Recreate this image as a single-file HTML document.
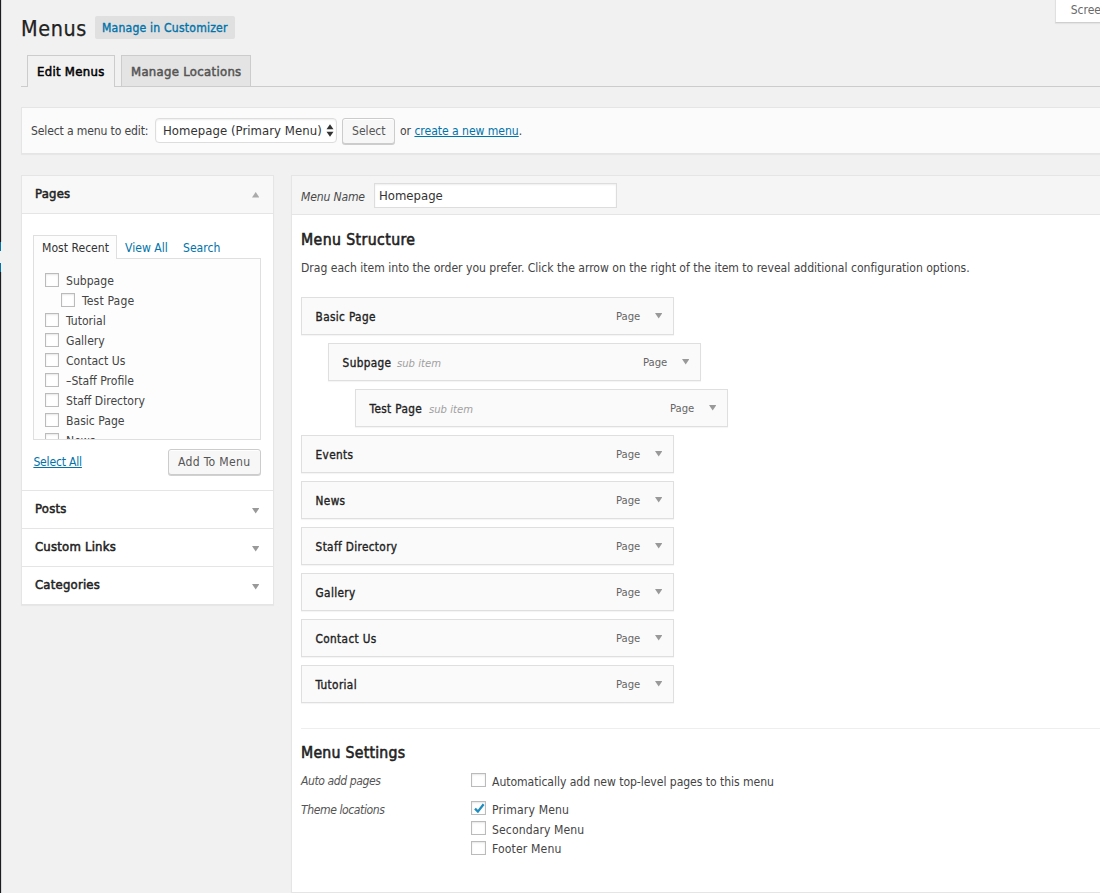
<!DOCTYPE html>
<html lang="en">
<head>
<meta charset="utf-8">
<title>Menus</title>
<style>
*{box-sizing:border-box;margin:0;padding:0}
html,body{width:1100px;height:893px;overflow:hidden;background:#f1f1f1}
body{position:relative;font-family:"DejaVu Sans Condensed","Liberation Sans",sans-serif;font-size:12.1px;color:#444;line-height:1}
.abs{position:absolute}
.t{position:absolute;white-space:nowrap;line-height:1}
.sb{-webkit-text-stroke:0.35px currentColor;letter-spacing:0.15px}
.sb3{-webkit-text-stroke:0.55px currentColor;letter-spacing:0.4px}
.sb4{-webkit-text-stroke:0.5px currentColor;letter-spacing:0.2px}
.sb2{-webkit-text-stroke:0.5px currentColor}
a{color:#0073aa}
.edge{left:0;top:0;width:2px;height:893px;background:linear-gradient(90deg,#1b1e21 0,#1b1e21 1px,#d8d8d8 1px,#d8d8d8 2px)}
.screen{left:1055px;top:-1px;width:60px;height:24px;background:#fff;border:1px solid #e0e0e0;border-bottom-color:#cfcfcf;box-shadow:0 1px 1px rgba(0,0,0,.05)}
.btncust{left:95px;top:16px;width:140px;height:23px;background:#e0e0e0;border-radius:2px}
.tabline{left:21px;top:86px;width:1090px;height:1px;background:#ccc}
.tab{top:55px;height:31px;border:1px solid #ccc;border-bottom:none;background:#e4e4e4}
.tab.act{background:#f1f1f1;height:32px}
.panel{background:#fff;border:1px solid #e5e5e5;box-shadow:0 1px 1px rgba(0,0,0,.04)}
.sel{background:#fff;border:1px solid #ddd;border-radius:4px;box-shadow:inset 0 1px 2px rgba(0,0,0,.07)}
.btn{background:#f7f7f7;border:1px solid #ccc;border-radius:3px;box-shadow:inset 0 1px 0 #fff,0 1px 0 rgba(0,0,0,.18)}
.inp{background:#fff;border:1px solid #ddd;box-shadow:inset 0 1px 2px rgba(0,0,0,.07)}
.cb{position:absolute;width:14px;height:14px;background:#fff;border:1px solid #bbb;box-shadow:inset 0 1px 2px rgba(0,0,0,.1)}
.mi{position:absolute;height:38px;width:373px;background:#fafafa;border:1px solid #dfdfdf;box-shadow:0 1px 1px rgba(0,0,0,.04)}
.mi .n{left:13.6px;top:14px;color:#222;font-size:11.7px;letter-spacing:0.36px}
.mi .s{top:14px;font-style:italic;color:#a0a0a0;font-size:11.2px;letter-spacing:0}
.mi .p{left:314px;top:13px;color:#666;font-size:11.2px}
.tri{position:absolute;width:7.4px;height:5.6px;background:#999;clip-path:polygon(0 0,100% 0,50% 100%)}
.triu{position:absolute;width:7.4px;height:5.6px;background:#aaa;clip-path:polygon(0 100%,100% 100%,50% 0)}
.mi .tri{left:353px;top:15px}
.hd{color:#222}
.it{font-style:italic;color:#555}
</style>
</head>
<body>
<div class="abs edge"></div>
<div class="abs" style="left:0;top:242px;width:2px;height:30px;background:#f1f1f1"></div>
<div class="abs" style="left:0;top:242px;width:1px;height:9px;background:#0073aa"></div>
<div class="abs" style="left:0;top:263px;width:1px;height:9px;background:#0073aa"></div>

<div class="abs screen"></div>
<div class="t" style="left:1070.7px;top:4px;font-size:12px;color:#6a6a6a">Screen Options</div>

<div class="t" style="left:21px;top:18px;font-size:21.4px;color:#222;letter-spacing:0.6px;-webkit-text-stroke:0.25px #222">Menus</div>
<div class="abs btncust"></div>
<div class="t sb" style="left:102px;top:22px;color:#0073aa;letter-spacing:0.2px">Manage in Customizer</div>

<div class="abs tabline"></div>
<div class="abs tab act" style="left:27px;width:88px"></div>
<div class="t sb2" style="left:37px;top:65px;font-size:13px;color:#000;letter-spacing:0.3px">Edit Menus</div>
<div class="abs tab" style="left:121px;width:130px"></div>
<div class="t sb2" style="left:131px;top:65px;font-size:13px;color:#555;letter-spacing:0.3px">Manage Locations</div>

<!-- select menu bar -->
<div class="abs panel" style="left:21px;top:107px;width:1090px;height:47px;background:#fbfbfb"></div>
<div class="t" style="left:31px;top:125px;letter-spacing:-0.15px">Select a menu to edit:</div>
<div class="abs sel" style="left:155px;top:118px;width:182px;height:25px"></div>
<div class="t" style="left:163px;top:124px;font-size:13px;color:#333;letter-spacing:0.05px">Homepage (Primary Menu)</div>
<svg class="abs" style="left:326px;top:124px" width="8" height="13" viewBox="0 0 8 13"><path d="M4 0.3 L7.5 5.2 L0.5 5.2 Z M4 12.7 L7.5 7.8 L0.5 7.8 Z" fill="#333"/></svg>
<div class="abs btn" style="left:342px;top:118px;width:53px;height:26px"></div>
<div class="t" style="left:352px;top:125px;color:#555">Select</div>
<div class="t" style="left:400px;top:125px;letter-spacing:-0.05px">or <a href="#">create a new menu</a>.</div>

<!-- left panel -->
<div class="abs panel" style="left:21px;top:175px;width:253px;height:430px"></div>
<div class="abs" style="left:22px;top:176px;width:251px;height:38px;background:#f8f8f8;border-bottom:1px solid #e5e5e5"></div>
<div class="t sb4 hd" style="left:35px;top:187px;font-size:13px">Pages</div>
<div class="triu" style="left:252px;top:192px"></div>

<div class="abs" style="left:33px;top:258px;width:228px;height:182px;background:#fdfdfd;border:1px solid #dfdfdf"></div>
<div class="abs" style="left:33px;top:235px;width:84px;height:24px;background:#fdfdfd;border:1px solid #dfdfdf;border-bottom:none"></div>
<div class="t" style="left:42px;top:242px;color:#333">Most Recent</div>
<div class="t" style="left:125px;top:242px;color:#0073aa">View All</div>
<div class="t" style="left:183px;top:242px;color:#0073aa">Search</div>

<div class="abs" style="left:34px;top:259px;width:226px;height:180px;overflow:hidden">
  <div class="cb" style="left:11px;top:14px"></div><div class="t" style="left:32px;top:16px">Subpage</div>
  <div class="cb" style="left:27px;top:34px"></div><div class="t" style="left:48px;top:36px;letter-spacing:0.15px">Test Page</div>
  <div class="cb" style="left:11px;top:54px"></div><div class="t" style="left:32px;top:56px">Tutorial</div>
  <div class="cb" style="left:11px;top:74px"></div><div class="t" style="left:32px;top:76px">Gallery</div>
  <div class="cb" style="left:11px;top:94px"></div><div class="t" style="left:32px;top:96px">Contact Us</div>
  <div class="cb" style="left:11px;top:114px"></div><div class="t" style="left:32px;top:116px">–Staff Profile</div>
  <div class="cb" style="left:11px;top:134px"></div><div class="t" style="left:32px;top:136px">Staff Directory</div>
  <div class="cb" style="left:11px;top:154px"></div><div class="t" style="left:32px;top:156px">Basic Page</div>
  <div class="cb" style="left:11px;top:174px"></div><div class="t" style="left:32px;top:176px">News</div>
</div>

<div class="t" style="left:33.4px;top:456px;letter-spacing:-0.2px"><a href="#">Select All</a></div>
<div class="abs btn" style="left:168px;top:449px;width:93px;height:26px"></div>
<div class="t" style="left:178px;top:456px;color:#555;letter-spacing:0.3px">Add To Menu</div>

<div class="abs" style="left:22px;top:490px;width:251px;height:1px;background:#e5e5e5"></div>
<div class="t sb4 hd" style="left:35px;top:502px;font-size:13px">Posts</div>
<div class="tri" style="left:252px;top:508px"></div>
<div class="abs" style="left:22px;top:528px;width:251px;height:1px;background:#e5e5e5"></div>
<div class="t sb4 hd" style="left:35px;top:540px;font-size:13px">Custom Links</div>
<div class="tri" style="left:252px;top:546px"></div>
<div class="abs" style="left:22px;top:566px;width:251px;height:1px;background:#e5e5e5"></div>
<div class="t sb4 hd" style="left:35px;top:578px;font-size:13px">Categories</div>
<div class="tri" style="left:252px;top:584px"></div>

<!-- right panel -->
<div class="abs panel" style="left:291px;top:175px;width:820px;height:718px"></div>
<div class="abs" style="left:292px;top:176px;width:819px;height:39px;background:#f5f5f5;border-bottom:1px solid #e5e5e5"></div>
<div class="t it" style="left:301px;top:190.6px;letter-spacing:-0.18px;color:#4a4a4a">Menu Name</div>
<div class="abs inp" style="left:374px;top:183px;width:243px;height:25px"></div>
<div class="t" style="left:379px;top:189px;font-size:13px;color:#333">Homepage</div>

<div class="t sb3 hd" style="left:301px;top:232px;font-size:15.7px">Menu Structure</div>
<div class="t" style="left:301px;top:262px;letter-spacing:-0.022px">Drag each item into the order you prefer. Click the arrow on the right of the item to reveal additional configuration options.</div>

<div class="mi" style="left:301px;top:297px"><div class="t sb n">Basic Page</div><div class="t p">Page</div><div class="tri"></div></div>
<div class="mi" style="left:328px;top:343px"><div class="t sb n">Subpage</div><div class="t s" style="left:68px">sub item</div><div class="t p">Page</div><div class="tri"></div></div>
<div class="mi" style="left:355px;top:389px"><div class="t sb n">Test Page</div><div class="t s" style="left:73px">sub item</div><div class="t p">Page</div><div class="tri"></div></div>
<div class="mi" style="left:301px;top:435px"><div class="t sb n">Events</div><div class="t p">Page</div><div class="tri"></div></div>
<div class="mi" style="left:301px;top:481px"><div class="t sb n">News</div><div class="t p">Page</div><div class="tri"></div></div>
<div class="mi" style="left:301px;top:527px"><div class="t sb n">Staff Directory</div><div class="t p">Page</div><div class="tri"></div></div>
<div class="mi" style="left:301px;top:573px"><div class="t sb n">Gallery</div><div class="t p">Page</div><div class="tri"></div></div>
<div class="mi" style="left:301px;top:619px"><div class="t sb n">Contact Us</div><div class="t p">Page</div><div class="tri"></div></div>
<div class="mi" style="left:301px;top:665px"><div class="t sb n">Tutorial</div><div class="t p">Page</div><div class="tri"></div></div>

<div class="abs" style="left:301px;top:728px;width:810px;height:1px;background:#eee"></div>
<div class="t sb3 hd" style="left:301px;top:745px;font-size:15.7px;letter-spacing:0.25px">Menu Settings</div>
<div class="t it" style="left:301px;top:775px;letter-spacing:-0.42px">Auto add pages</div>
<div class="cb" style="left:471px;top:773px;width:15px"></div>
<div class="t" style="left:492px;top:776px;letter-spacing:-0.05px">Automatically add new top-level pages to this menu</div>
<div class="t it" style="left:301px;top:804px;letter-spacing:-0.42px">Theme locations</div>
<div class="cb" style="left:471px;top:801px;width:15px"></div>
<svg class="abs" style="left:473px;top:802px" width="13" height="12" viewBox="0 0 13 12"><path d="M2 6.6 L4.9 9.6 L10.6 2.2" fill="none" stroke="#1e8cbe" stroke-width="2.3"/></svg>
<div class="t" style="left:492px;top:804px;letter-spacing:0.15px">Primary Menu</div>
<div class="cb" style="left:471px;top:821px;width:15px"></div>
<div class="t" style="left:492px;top:824px;letter-spacing:0.1px">Secondary Menu</div>
<div class="cb" style="left:471px;top:841px;width:15px"></div>
<div class="t" style="left:492px;top:843px;letter-spacing:0.15px">Footer Menu</div>
</body>
</html>
